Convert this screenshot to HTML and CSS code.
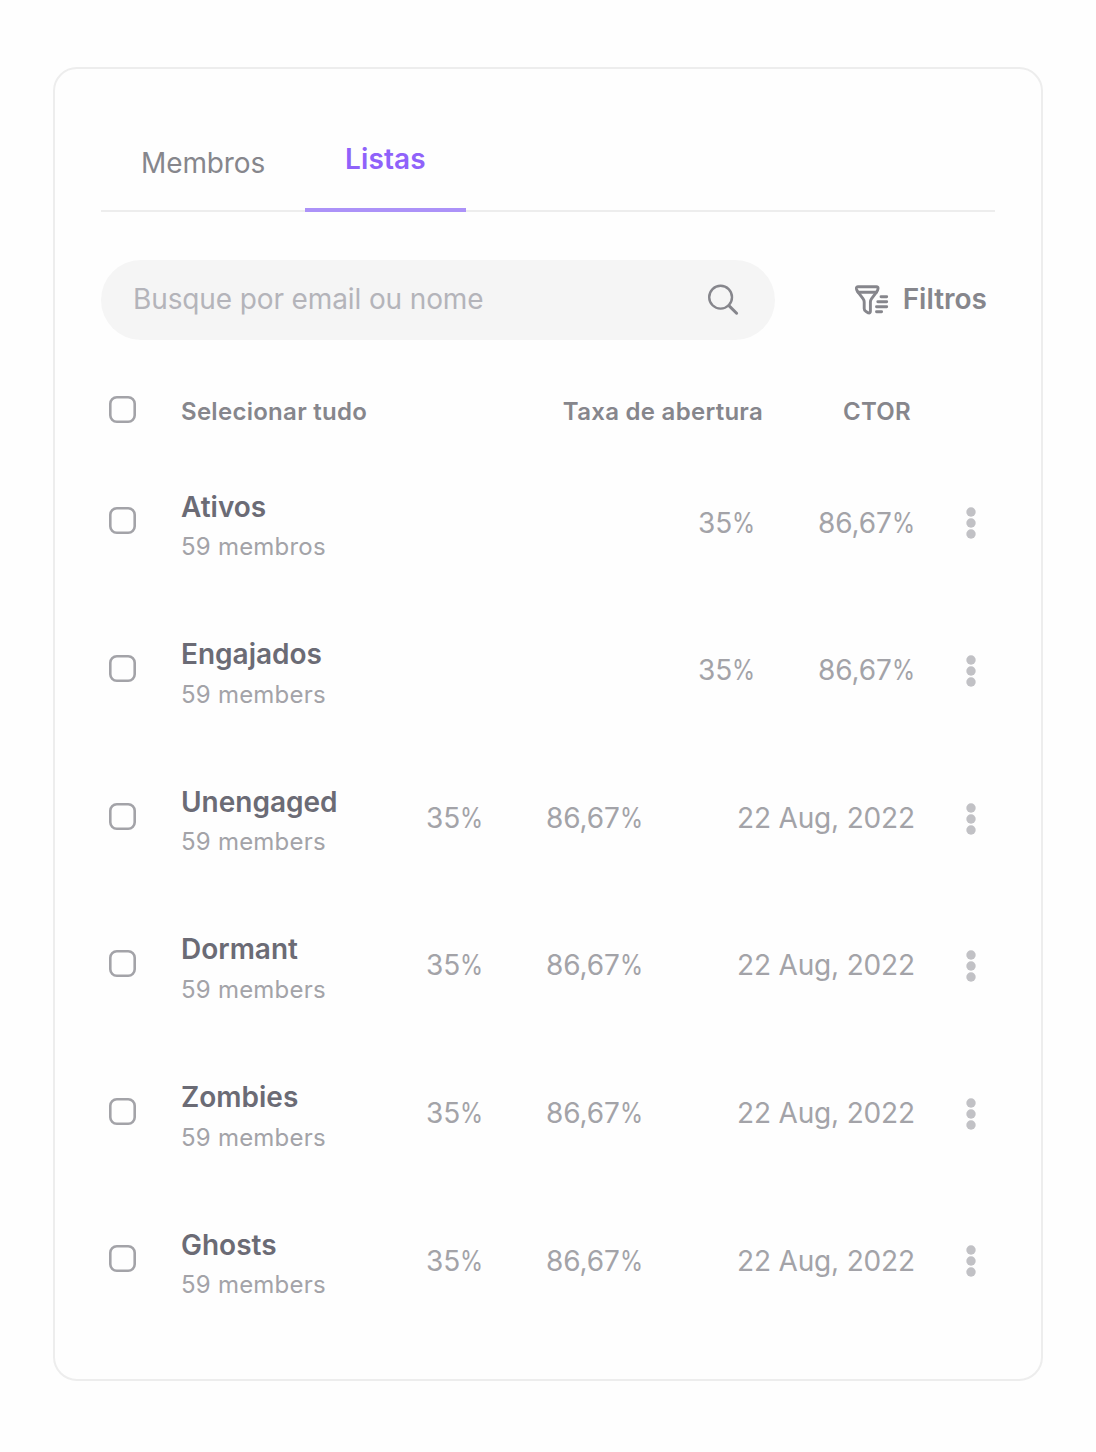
FILE: index.html
```html
<!DOCTYPE html>
<html lang="pt-BR">
  <head>
    <meta charset="UTF-8" />
    <meta name="viewport" content="width=device-width, initial-scale=1.0" />
    <title>Listas</title>
    <link rel="stylesheet" href="styles.css">
  </head>
  <body>
    <svg width="0" height="0" class="sprite">
      <symbol id="box" viewBox="0 0 27 27">
        <rect x="1.3" y="1.3" width="24.4" height="24.4" rx="6.5" />
      </symbol>
      <symbol id="dots" viewBox="0 0 10 32">
        <circle cx="5" cy="5" r="4.7" />
        <circle cx="5" cy="16" r="4.7" />
        <circle cx="5" cy="27" r="4.7" />
      </symbol>
    </svg>

    <main class="card">
      <nav class="tabs">
        <a class="tab">Membros</a>
        <a class="tab active">Listas</a>
      </nav>

      <div class="toolbar">
        <div class="search">
          <span>Busque por email ou nome</span>
          <svg class="search-icon" viewBox="0 0 32 32">
            <circle cx="13.6" cy="13.2" r="11.4" />
            <path d="M21.9 21.6L29.6 29.2" stroke-width="3" />
          </svg>
        </div>
        <div class="filter">
          <svg class="filter-icon" viewBox="0 0 34 30">
            <path d="M3 1.7H21.5Q23.2 1.7 23 3.6Q22.8 5.5 21.5 7.2L16.6 13.6Q15.4 15.2 15.4 17V26.2Q15.4 28.4 13.4 27.9L11 26.5Q9.2 25.5 9.2 23.4V17Q9.2 15.2 8 13.6L3 7.2Q1.6 5.3 1.4 3.4Q1.3 1.7 3 1.7Z" />
            <path d="M3 7.2H21.5M26 11.7H31.7M22.8 16.7H31.7M21.5 21.7H31.7M21.5 26.7H26.6" />
          </svg>
          <span>Filtros</span>
        </div>
      </div>

      <div class="list-head">
        <svg class="checkbox"><use href="#box" /></svg>
        <span class="select-all">Selecionar tudo</span>
        <span class="open-rate">Taxa de abertura</span>
        <span class="ctor">CTOR</span>
      </div>

      <ul class="list">
        <li class="row">
          <svg class="checkbox"><use href="#box" /></svg>
          <div class="info">
            <strong>Ativos</strong>
            <small>59 membros</small>
          </div>
          <span class="value open">35<i>%</i></span>
          <span class="value click">86,67<i>%</i></span>
          <svg class="dots"><use href="#dots" /></svg>
        </li>
        <li class="row">
          <svg class="checkbox"><use href="#box" /></svg>
          <div class="info">
            <strong>Engajados</strong>
            <small>59 members</small>
          </div>
          <span class="value open">35<i>%</i></span>
          <span class="value click">86,67<i>%</i></span>
          <svg class="dots"><use href="#dots" /></svg>
        </li>
        <li class="row">
          <svg class="checkbox"><use href="#box" /></svg>
          <div class="info">
            <strong>Unengaged</strong>
            <small>59 members</small>
          </div>
          <span class="value open">35<i>%</i></span>
          <span class="value click">86,67<i>%</i></span>
          <span class="value date">22 Aug, 2022</span>
          <svg class="dots"><use href="#dots" /></svg>
        </li>
        <li class="row">
          <svg class="checkbox"><use href="#box" /></svg>
          <div class="info">
            <strong>Dormant</strong>
            <small>59 members</small>
          </div>
          <span class="value open">35<i>%</i></span>
          <span class="value click">86,67<i>%</i></span>
          <span class="value date">22 Aug, 2022</span>
          <svg class="dots"><use href="#dots" /></svg>
        </li>
        <li class="row">
          <svg class="checkbox"><use href="#box" /></svg>
          <div class="info">
            <strong>Zombies</strong>
            <small>59 members</small>
          </div>
          <span class="value open">35<i>%</i></span>
          <span class="value click">86,67<i>%</i></span>
          <span class="value date">22 Aug, 2022</span>
          <svg class="dots"><use href="#dots" /></svg>
        </li>
        <li class="row">
          <svg class="checkbox"><use href="#box" /></svg>
          <div class="info">
            <strong>Ghosts</strong>
            <small>59 members</small>
          </div>
          <span class="value open">35<i>%</i></span>
          <span class="value click">86,67<i>%</i></span>
          <span class="value date">22 Aug, 2022</span>
          <svg class="dots"><use href="#dots" /></svg>
        </li>
      </ul>
    </main>
  </body>
</html>
```
FILE: styles.css
```css
* {
  box-sizing: border-box;
}

body {
  margin: 0;
  padding: 67px 53px 71px;
  background: #fefefe;
  font-family: Inter, "Liberation Sans", sans-serif;
  font-size: 28px;
  line-height: 40px;
  color: #a3a3a8;
}

.sprite {
  display: block;
}

.card {
  height: 1314px;
  padding: 61px 46px 0;
  border: 2px solid #ededed;
  border-radius: 24px;
}

.tabs {
  display: flex;
  height: 82px;
  border-bottom: 2px solid #ededed;
}

.tab {
  height: 82px;
  padding: 13px 40px 0;
  color: #86868c;
  letter-spacing: -0.12px;
}

.tab.active {
  padding-top: 9px;
  border-bottom: 4px solid #ac92f8;
  color: #8f62fa;
  font-weight: 600;
  letter-spacing: 0.1px;
}

.toolbar {
  display: flex;
  align-items: center;
  justify-content: space-between;
  margin-top: 48px;
  padding-right: 8px;
}

.toolbar span {
  padding-bottom: 2px;
}

.search {
  display: flex;
  align-items: center;
  justify-content: space-between;
  width: 674px;
  height: 80px;
  padding: 0 36px 0 32px;
  border-radius: 40px;
  background: #f5f5f5;
  color: #b4b4ba;
  letter-spacing: -0.12px;
}

.search-icon {
  width: 32px;
  height: 32px;
  fill: none;
  stroke: #86868c;
  stroke-width: 2.4;
  stroke-linecap: round;
}

.filter {
  display: flex;
  align-items: center;
  gap: 14px;
  color: #86868c;
  font-weight: 600;
}

.filter-icon {
  width: 34px;
  height: 30px;
  fill: none;
  stroke: #86868c;
  stroke-width: 2.9;
  stroke-linecap: round;
  stroke-linejoin: round;
}

.list-head {
  display: flex;
  margin-top: 52px;
  padding: 0 84px 0 8px;
  color: #86868c;
  font-size: 24px;
  font-weight: 600;
  letter-spacing: 0.28px;
}

.checkbox {
  flex: none;
  width: 27px;
  height: 27px;
  margin-right: 45px;
  fill: none;
  stroke: #a3a3a8;
  stroke-width: 2.6;
}

.list-head .checkbox {
  margin-top: 4px;
}

.select-all {
  flex: 1;
}

.ctor {
  margin-left: 80px;
}

.list {
  margin: 55px 0 0;
  padding: 0;
  list-style: none;
}

.row {
  display: flex;
  height: 147.6px;
  padding: 0 19px 0 8px;
}

.row .checkbox {
  margin-top: 20.35px;
}

.info {
  flex: 1;
  margin-top: -0.35px;
}

.info strong,
.info small {
  display: block;
}

.info strong {
  color: #6b6b75;
  font-weight: 600;
}

.info small {
  margin-top: 0.5px;
  font-size: 24px;
  letter-spacing: 0.22px;
}

.value {
  margin-top: 15.65px;
  letter-spacing: -0.1px;
  white-space: nowrap;
}

/* narrower percent sign */
.value i {
  display: inline-block;
  font-style: normal;
  transform: scaleX(0.84);
  transform-origin: left;
}

.open {
  width: 120px;
}

.click {
  width: 97px;
}

.date {
  width: 178px;
  margin-left: 94px;
  letter-spacing: -0.17px;
}

.dots {
  width: 10px;
  height: 32px;
  margin: 20.35px 0 0 51px;
  fill: #c1c1c5;
}
```
